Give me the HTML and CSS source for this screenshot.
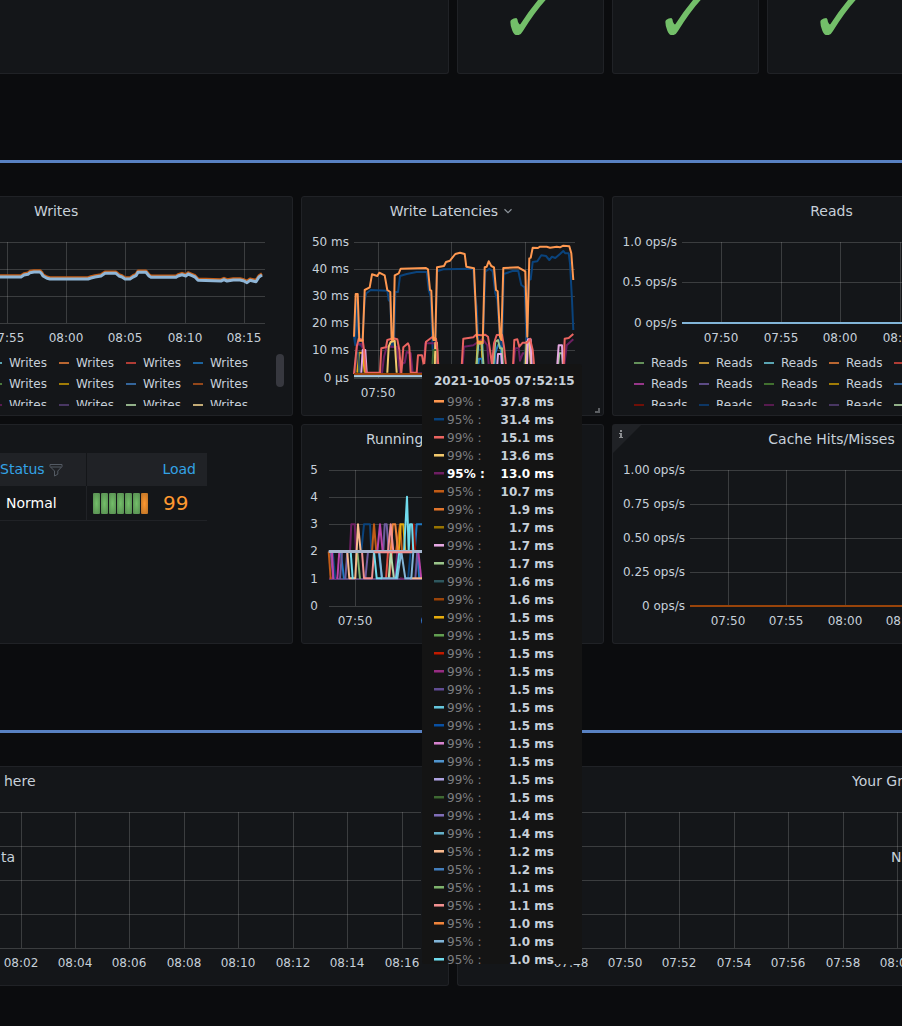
FILE: index.html
```html
<!DOCTYPE html>
<html lang="en">
<head>
    <meta charset="UTF-8">
    <meta name="viewport" content="width=device-width, initial-scale=1.0">
    <title>Dashboard</title>
    <link rel="stylesheet" href="styles.css">
</head>
<body>
    <main class="dashboard">
        <section class="row row-status">
            <div class="panel cut-left"></div>
            <div class="panel check"><svg class="check-icon" viewBox="210 0 108 108" role="img" aria-label="OK"><path d="M211 65Q211 57 229 54Q233 56 234 66L238 73L241 73Q265 35 294 0L317 0Q285 35 249 93Q243 104 236 105L228 105Q222 104 217 92Q211 78 211 65Z"/></svg></div>
            <div class="panel check"><svg class="check-icon" viewBox="210 0 108 108" role="img" aria-label="OK"><path d="M211 65Q211 57 229 54Q233 56 234 66L238 73L241 73Q265 35 294 0L317 0Q285 35 249 93Q243 104 236 105L228 105Q222 104 217 92Q211 78 211 65Z"/></svg></div>
            <div class="panel check cut-right"><svg class="check-icon" viewBox="210 0 108 108" role="img" aria-label="OK"><path d="M211 65Q211 57 229 54Q233 56 234 66L238 73L241 73Q265 35 294 0L317 0Q285 35 249 93Q243 104 236 105L228 105Q222 104 217 92Q211 78 211 65Z"/></svg></div>
        </section>

        <hr class="divider">

        <section class="row row-metrics">
            <div class="panel cut-left">
                <h2 class="panel-title title-writes">Writes</h2>
                <svg class="chart" id="writes"></svg>
                <div class="legend-wrap">
                    <div class="legend legend-writes" id="writes-legend"></div>
                    <div class="scroll-thumb"></div>
                </div>
            </div>

            <div class="panel">
                <h2 class="panel-title">
                    <button class="title-button">Write Latencies
                        <svg class="chevron" viewBox="0 0 12 12"><path d="M3 4.5L6 7.5L9 4.5"/></svg>
                    </button>
                </h2>
                <svg class="chart chart-tall" id="latencies"></svg>
                <div class="resize-handle"></div>
                <div class="tooltip">
                    <div class="tooltip-time">2021-10-05 07:52:15</div>
                    <div id="tooltip-rows"></div>
                </div>
            </div>

            <div class="panel cut-right">
                <h2 class="panel-title title-reads">Reads</h2>
                <svg class="chart" id="reads"></svg>
                <div class="legend-wrap">
                    <div class="legend legend-reads" id="reads-legend"></div>
                </div>
            </div>

            <div class="panel cut-left">
                <h2 class="panel-title"></h2>
                <table class="nodes">
                    <thead>
                        <tr>
                            <th class="col-status">Status <svg class="funnel" viewBox="0 0 14 14"><path d="M1 1.5H13V3.5L8.8 8V11.2L5.5 13V8L1 3.5ZM1.5 4H12.5"/></svg></th>
                            <th class="col-load">Load</th>
                        </tr>
                    </thead>
                    <tbody>
                        <tr>
                            <td class="col-status">Normal</td>
                            <td class="col-load">
                                <div class="gauge">
                                    <div class="bars">
                                        <span class="bar"></span><span class="bar"></span><span class="bar"></span><span class="bar"></span><span class="bar"></span><span class="bar"></span><span class="bar bar-high"></span>
                                    </div>
                                    <span class="load-value">99</span>
                                </div>
                            </td>
                        </tr>
                    </tbody>
                </table>
            </div>

            <div class="panel">
                <h2 class="panel-title title-running">Running</h2>
                <svg class="chart chart-tall" id="running"></svg>
            </div>

            <div class="panel cut-right">
                <svg class="info-corner" viewBox="0 0 28 28"><path class="info-bg" d="M0 0H28L0 28Z"/><path class="info-i" d="M7 5H9V7H7ZM6 8H9V12H10V13H6V12H7V9H6Z"/></svg>
                <h2 class="panel-title title-reads">Cache Hits/Misses</h2>
                <svg class="chart chart-tall" id="cache"></svg>
            </div>
        </section>

        <hr class="divider">

        <section class="row row-graphs">
            <div class="panel cut-left">
                <h2 class="panel-title title-graph-left">here</h2>
                <svg class="chart chart-tall" id="graph-left"></svg>
            </div>
            <div class="panel cut-right">
                <h2 class="panel-title title-graph-right">Your Graph here</h2>
                <svg class="chart chart-tall" id="graph-right"></svg>
            </div>
        </section>
    </main>
    <script src="charts.js"></script>
</body>
</html>
```
FILE: styles.css
```css
* {
    box-sizing: border-box;
}
body {
    margin: 0;
    background-color: #0b0c0e;
    color: #c7d0d9;
    font-family: "DejaVu Sans", sans-serif;
    font-size: 12px;
    overflow: hidden;
}
.dashboard {
    min-height: 100vh;
    overflow: hidden;
}
.row {
    display: grid;
    gap: 8px;
}
.row-status {
    grid-template-columns: 449fr 147fr 147fr 135fr;
    grid-auto-rows: 74px;
}
.row-metrics {
    grid-template-columns: 293fr 303fr 290fr;
    grid-auto-rows: 220px;
}
.row-graphs {
    grid-template-columns: 449fr 445fr;
    grid-auto-rows: 220px;
}
.divider {
    height: 3px;
    margin: 86px 0 33px;
    border: 0;
    background-color: #5881c2;
}

/* panels */
.panel {
    position: relative;
    display: flex;
    flex-direction: column;
    min-width: 0;
    background-color: #141619;
    border: 1px solid #202226;
    border-radius: 3px;
}
.row-status .panel {
    border-top: 0;
    border-top-left-radius: 0;
    border-top-right-radius: 0;
}
.cut-left {
    border-left: 0;
    border-top-left-radius: 0;
    border-bottom-left-radius: 0;
}
.cut-right {
    border-right: 0;
    border-top-right-radius: 0;
    border-bottom-right-radius: 0;
}
.check {
    padding-left: 52px;
}
.check-icon {
    width: 36px;
    height: 36px;
    fill: #73bf69;
}
.panel-title {
    height: 28px;
    margin: 0;
    font-size: 14px;
    font-weight: normal;
    line-height: 28px;
    text-align: center;
    white-space: nowrap;
}
.title-writes,
.title-running,
.title-graph-left,
.title-graph-right {
    text-align: left;
}
.title-writes {
    padding-left: 34px;
}
.title-running {
    padding-left: 64px;
}
.title-graph-left {
    padding-left: 4px;
}
.title-graph-right {
    padding-left: 394px;
    overflow: hidden;
}
.title-reads {
    padding-left: 148px;
}
.title-button {
    display: inline-flex;
    align-items: center;
    gap: 3px;
    height: 28px;
    padding: 0;
    border: 0;
    background: none;
    color: inherit;
    font: inherit;
    cursor: pointer;
}
.chevron {
    width: 14px;
    height: 14px;
    fill: none;
    stroke: #8e959c;
}
.resize-handle {
    position: absolute;
    right: 3px;
    bottom: 2px;
    width: 5px;
    height: 5px;
    border-right: 2px solid #5c5f63;
    border-bottom: 2px solid #5c5f63;
}
.info-corner {
    position: absolute;
    top: 0;
    left: 0;
    width: 28px;
    height: 28px;
}
.info-bg {
    fill: #202226;
}
.info-i {
    fill: #8e9093;
}

/* charts */
.chart {
    display: block;
    width: 100%;
    height: 128px;
}
.chart-tall {
    height: 188px;
}
.chart text {
    fill: #c7d0d9;
    font-size: 12px;
}
.chart .no-data {
    font-size: 14px;
}
.grid-line {
    stroke: rgba(200, 200, 200, 0.22);
    stroke-width: 1;
}
.series {
    fill: none;
    stroke-width: 2;
    stroke-linejoin: round;
}
#writes .series {
    stroke-width: 3;
}

/* legends */
.legend-wrap {
    display: flex;
    height: 54px;
    margin-top: -1px;
    overflow: hidden;
}
.legend {
    display: grid;
    align-content: start;
    flex: 1;
    overflow: hidden;
}
.legend-writes {
    grid-template-columns: 59px repeat(3, 67px);
}
.legend-reads {
    grid-template-columns: repeat(5, 65px);
    padding-left: 21px;
}
.legend-item {
    display: flex;
    align-items: center;
    gap: 7px;
    height: 21px;
}
.legend-writes .legend-item:nth-child(4n+1) .dash {
    width: 2px;
}
.dash {
    flex: none;
    width: 10px;
    height: 2px;
}
.scroll-thumb {
    width: 8px;
    height: 33px;
    margin: 2px 8px 0 0;
    border-radius: 4px;
    background-color: #37383f;
}

/* node table */
.nodes {
    width: 207px;
    border-spacing: 0;
    table-layout: fixed;
    font-size: 14px;
}
.nodes th {
    height: 33px;
    padding: 0 0 1px;
    background-color: #202226;
    color: #33a2e5;
    font-weight: normal;
    text-align: left;
}
.nodes td {
    height: 35px;
    padding: 0 0 0 6px;
    border-bottom: 1px solid #202226;
    color: #ffffff;
}
.nodes .col-status {
    width: 87px;
    border-right: 1px solid #202226;
}
.nodes th.col-status {
    border-right-color: #141619;
}
.nodes th.col-load {
    padding-right: 11px;
    text-align: right;
}
.funnel {
    width: 14px;
    height: 14px;
    vertical-align: -3px;
    fill: none;
    stroke: #535a63;
}
.gauge {
    display: flex;
    align-items: center;
    gap: 15px;
}
.bars {
    display: flex;
    gap: 1px;
}
.bar {
    width: 7px;
    height: 21px;
    border-radius: 1px;
    background: radial-gradient(#73bf69, #55894f);
}
.bar-high {
    background: radial-gradient(#ff9830, #b87026);
}
.load-value {
    color: #ff9830;
    font-size: 20px;
}

/* hover tooltip */
.tooltip {
    position: absolute;
    z-index: 10;
    top: 167px;
    left: 120px;
    width: 160px;
    height: 600px;
    padding: 8px 12px 0;
    overflow: hidden;
    border-radius: 3px;
    background-color: #141414;
    line-height: 18px;
    white-space: nowrap;
}
.tooltip-time {
    height: 21px;
    font-weight: bold;
}
.tooltip-row {
    display: flex;
    align-items: center;
    gap: 3px;
    height: 18px;
    padding-right: 16px;
}
.tooltip-row .dash {
    height: 3px;
    margin-bottom: 1px;
    border-bottom: 1px solid rgba(0, 0, 0, 0.4);
}
.tooltip-label {
    color: #7b7d80;
}
.tooltip-value {
    margin-left: auto;
    font-weight: bold;
}
.highlight .tooltip-label,
.highlight .tooltip-value {
    color: #ffffff;
    font-weight: bold;
}
```
FILE: charts.js
```js
const NS = 'http://www.w3.org/2000/svg';

function add(svg, tag, attrs, text) {
    const el = document.createElementNS(NS, tag);
    for (const key in attrs) el.setAttribute(key, attrs[key]);
    if (text) el.textContent = text;
    svg.appendChild(el);
}

// c.w is the width the x values are given for, they are spread over the real width
function drawChart(id, c) {
    const svg = document.getElementById(id);
    const k = svg.clientWidth / c.w;
    const left = c.x0 * k, right = c.x1 * k;
    const top = c.rows[0], bottom = c.rows[c.rows.length - 1];

    c.rows.forEach((y, i) => {
        add(svg, 'line', {class: 'grid-line', x1: left, x2: right, y1: y + 0.5, y2: y + 0.5});
        if (c.yLabels && c.yLabels[i]) {
            add(svg, 'text', {x: left - 5 - (c.labelGap || 0), y: y + 4, 'text-anchor': 'end'}, c.yLabels[i]);
        }
    });
    c.cols.forEach(([x, label]) => {
        const px = Math.round(x * k);
        add(svg, 'line', {class: 'grid-line', x1: px + 0.5, x2: px + 0.5, y1: top, y2: bottom});
        if (label) add(svg, 'text', {x: px, y: bottom + 19, 'text-anchor': 'middle'}, label);
    });
    // series points use three units per pixel
    (c.series || []).forEach(([color, data]) => {
        data.split('|').forEach(part => {
            const n = part.trim().split(/[ ,]+/).map(Number);
            const pts = [];
            for (let i = 0; i < n.length; i += 2) {
                pts.push(((n[i] / 3 + c.dx) * k).toFixed(1) + ',' + (n[i + 1] / 3 + c.dy).toFixed(1));
            }
            add(svg, 'polyline', {class: 'series', stroke: color, points: pts.join(' ')});
        });
    });
    if (c.noData) {
        add(svg, 'text', {class: 'no-data', x: c.noData[0] * k, y: 67}, c.noData[1]);
    }
}

const writes = '0 261,63 261,72 255,84 253,90 248,102 246,120 246,125 251,129 258,141 265,150 267,264 267,273 264,285 261,303 258,315 250,348 250,357 258,366 261,375 267,390 267,399 261,408 257,414 247,438 247,447 258,453 262,528 262,534 258,546 254,558 258,564 252,576 257,585 261,594 271,663 273,672 269,681 273,700 270,720 270,732 273,741 278,750 271,768 275,777 261,786 255';

drawChart('writes', {
    w: 292, x0: 0, x1: 265, dx: 0, dy: -35,
    rows: [17, 44, 71, 98],
    cols: [[7, '07:55'], [66, '08:00'], [125, '08:05'], [185, '08:10'], [244, '08:15']],
    series: [
        ['#c15c17', writes.replace(/ (\d+)/g, (m, y) => ' ' + (y - 4))],
        ['#8fb5d6', writes]
    ]
});

drawChart('latencies', {
    w: 301, x0: 52, x1: 273, dx: -2, dy: -35,
    rows: [17, 44, 71, 98, 125, 153],
    yLabels: ['50 ms', '40 ms', '30 ms', '20 ms', '10 ms', '0 µs'],
    cols: [[76, '07:50'], [149, ''], [223, '']],
    series: [
        ['#0a437c', '162 440,166 465,170 330,176 460,186 470,194 330,199 310,212 300,262 302,266 330,271 335,276 470,282 470,286 306,294 306,300 258,320 252,350 246,380 246,386 300,392 320,398 480,406 480,411 244,430 238,520 236,524 310,530 350,536 480,548 480,556 245,568 236,578 244,586 310,592 330,600 450,606 480,611 252,640 242,655 243,664 285,674 292,680 480,686 270,692 268,698 216,712 214,724 196,738 198,748 210,756 200,766 204,780 192,790 183,796 190,806 190,810 220,816 330,820 420'],
        ['#6d1f62', '164 550,172 464,184 462,190 480,196 550,246 550,252 500,260 470,290 470,300 550,308 520,314 518,320 486,332 490,338 550,370 550,376 460,404 460,410 548,486 548,492 470,520 466,548 446,562 466,568 550,638 548,646 475,656 475,660 512,668 490,674 490,680 548,790 548,800 466,820 448'],
        ['#e5ac0e', '172 548,178 488,188 488,194 548|528 548,533 455,544 455,550 548'],
        ['#2f575e', '164 548,169 488,175 488,178 548|672 548,677 460,686 460,692 480,694 548'],
        ['#f2c96d', '262 548,266 470,272 456,284 452,290 548|404 548,406 458,411 458,414 548|676 548,680 455,688 455,694 548'],
        ['#1f78c1', '532 548,537 506,546 506,550 548|582 548,586 490,594 465,602 470,606 548'],
        ['#9ac48a', '528 548,535 462,546 460,552 548|578 548,586 455,594 450,600 475,606 475,610 548|772 548,778 490,787 490,790 548'],
        ['#3f6833', '396 548,400 480,412 480,416 548'],
        ['#e5a8e2', '184 548,188 480,196 480,200 548|590 548,594 492,604 492,608 548|680 548,684 448,692 448,696 548|770 548,776 466,786 466,790 548'],
        ['#ea6460', '162 552,170 470,176 446,188 450,192 480,198 548,240 548,244 475,258 472,262 450,280 445,292 448,298 480,304 550,310 472,324 460,328 470,332 548,350 548,354 496,366 496,372 530,378 455,396 442,408 446,412 480,416 548,484 548,490 446,520 442,528 434,544 436,556 434,564 440,570 480,576 525,582 460,590 435,606 434,612 470,620 548,638 548,643 450,652 448,658 470,668 458,682 458,690 446,698 480,704 548,790 548,794 446,806 444,820 432'],
        ['#ff9850', '162 440,167 312,173 312,178 452,188 452,194 300,209 292,216 253,232 258,238 248,254 256,262 300,271 306,275 450,280 450,284 256,296 250,302 236,378 234,384 238,390 300,394 302,400 450,406 450,411 232,432 228,438 216,450 212,466 192,480 188,494 192,499 230,522 235,531 440,534 460,548 460,554 232,560 230,566 214,574 228,582 232,588 300,593 304,600 440,604 450,610 234,655 232,676 244,682 440,688 205,692 203,698 173,714 174,720 170,740 170,750 173,770 170,780 172,790 167,808 169,814 190,820 270'],
        ['#806eb7', '162 556,380 556'],
        ['#aacfdc', '162 559,380 559'],
        ['#99440a', '162 552,380 552']
    ]
});

drawChart('reads', {
    w: 289, x0: 69, x1: 289, dx: -8, dy: -35,
    rows: [17, 57, 98],
    yLabels: ['1.0 ops/s', '0.5 ops/s', '0 ops/s'],
    cols: [[108, '07:50'], [168, '07:55'], [227, '08:00'], [287, '08:05']],
    series: [['#82b5d8', '231 399,900 399']]
});

drawChart('running', {
    w: 301, x0: 27, x1: 273, dx: -2, dy: -33, labelGap: 6,
    rows: [17, 44, 71, 98, 126, 153],
    yLabels: ['5', '4', '3', '2', '1', '0'],
    cols: [[53, '07:50'], [136, '07:55']],
    series: [
        ['#584477', '88 477,366 477'],
        ['#6d1f62', '88 475,112 475|150 395,154 313,164 313,168 395|284 477,292 395|300 475,312 477'],
        ['#0a437c', '98 395,106 477|184 395,192 313,210 313,214 395|324 477,332 395'],
        ['#1f78c1', '122 395,132 477|236 395,246 477|344 395,350 313,366 313|352 395,358 477'],
        ['#705da0', '92 395,100 477|120 477,126 395|136 477,142 395|196 477,204 395|250 395,254 313,260 313,266 395|346 477,352 395'],
        ['#c15c17', '86 395,92 477|216 395,222 313,229 395|288 395,300 313,306 395'],
        ['#ba43a9', '96 395,100 477|112 477,118 395|232 395,240 313,248 395|355 395,364 477'],
        ['#7eb26d', '172 395,180 477'],
        ['#e24d42', '258 477,264 395|268 477,276 395'],
        ['#b7dbab', '266 477,272 395,282 477'],
        ['#e5ac0e', '296 395,302 313,310 313,316 395'],
        ['#ef843c', '272 395,278 313,286 313,294 395'],
        ['#890f02', '336 395,341 313,346 395'],
        ['#f29191', '186 395,192 475,216 475,222 395|264 395,272 313,280 395'],
        ['#f9ba8f', '142 395,148 475,166 475,174 313,182 395|330 475,366 475'],
        ['#82b5d8', '238 395,246 475,292 475,304 395,316 475,334 475,340 395'],
        ['#70dbed', '152 395,158 477|222 395,230 475,246 475|288 475,298 395|312 395,321 230,326 395,330 313,336 313,340 395'],
        ['#a5b4cc', '86 393,366 393'],
        ['#a5b4cc', '86 396,366 396'],
        ['#f29191', '222 397,336 397']
    ]
});

drawChart('cache', {
    w: 289, x0: 77, x1: 289, dx: -8, dy: -33,
    rows: [17, 51, 85, 119, 153],
    yLabels: ['1.00 ops/s', '0.75 ops/s', '0.50 ops/s', '0.25 ops/s', '0 ops/s'],
    cols: [[115, '07:50'], [173, '07:55'], [232, '08:00'], [290, '08:05']],
    series: [['#99440a', '255 558,900 558']]
});

drawChart('graph-left', {
    w: 448, x0: 0, x1: 421,
    rows: [17, 51, 85, 119, 153],
    cols: [[21, '08:02'], [75, '08:04'], [129, '08:06'], [184, '08:08'], [238, '08:10'], [293, '08:12'], [347, '08:14'], [402, '08:16']],
    noData: [1, 'ta']
});

drawChart('graph-right', {
    w: 444, x0: 25, x1: 444,
    rows: [17, 51, 85, 119, 153],
    cols: [[113, '07:48'], [167, '07:50'], [221, '07:52'], [276, '07:54'], [330, '07:56'], [385, '07:58'], [439, '08:00']],
    noData: [433, 'No data']
});

function legend(id, name, colors) {
    document.getElementById(id).innerHTML = colors.map(color =>
        `<div class="legend-item"><span class="dash" style="background-color: ${color}"></span>${name}</div>`).join('');
}

legend('writes-legend', 'Writes', [
    '#5aa5b3', '#b96631', '#b03c35', '#1c629c',
    '#4b7a3d', '#a07c06', '#34659b', '#94471a',
    '#571b4f', '#493763', '#92b089', '#c3ab76'
]);
legend('reads-legend', 'Reads', [
    '#64915a', '#b98e35', '#5aa5b3', '#b96631', '#b03c35',
    '#963689', '#5c4b85', '#41702f', '#a07c06', '#34659b',
    '#700f07', '#0d3765', '#571b4f', '#493763', '#92b089'
]);

const points = [
    ['#ff9850', '99%', '37.8'], ['#0a437c', '95%', '31.4'], ['#ea6460', '99%', '15.1'],
    ['#f2c96d', '99%', '13.6'], ['#6d1f62', '95%', '13.0'], ['#c15c17', '95%', '10.7'],
    ['#e0752d', '99%', '1.9'], ['#967302', '99%', '1.7'], ['#e5a8e2', '99%', '1.7'],
    ['#9ac48a', '99%', '1.7'], ['#2f575e', '99%', '1.6'], ['#99440a', '99%', '1.6'],
    ['#e5ac0e', '99%', '1.5'], ['#629e51', '99%', '1.5'], ['#bf1b00', '99%', '1.5'],
    ['#962d82', '99%', '1.5'], ['#614d93', '99%', '1.5'], ['#65c5db', '99%', '1.5'],
    ['#0a50a1', '99%', '1.5'], ['#d683ce', '99%', '1.5'], ['#5195ce', '99%', '1.5'],
    ['#aea2e0', '99%', '1.5'], ['#3f6833', '99%', '1.5'], ['#806eb7', '99%', '1.4'],
    ['#64b0c8', '99%', '1.4'], ['#f9ba8f', '95%', '1.2'], ['#447ebc', '95%', '1.2'],
    ['#7eb26d', '95%', '1.1'], ['#f29191', '95%', '1.1'], ['#ef843c', '95%', '1.0'],
    ['#82b5d8', '95%', '1.0'], ['#70dbed', '95%', '1.0']
];
document.getElementById('tooltip-rows').innerHTML = points.map(([color, label, value], i) =>
    `<div class="tooltip-row${i === 4 ? ' highlight' : ''}">
        <span class="dash" style="background-color: ${color}"></span>
        <span class="tooltip-label">${label} :</span>
        <span class="tooltip-value">${value} ms</span>
    </div>`).join('');
```
